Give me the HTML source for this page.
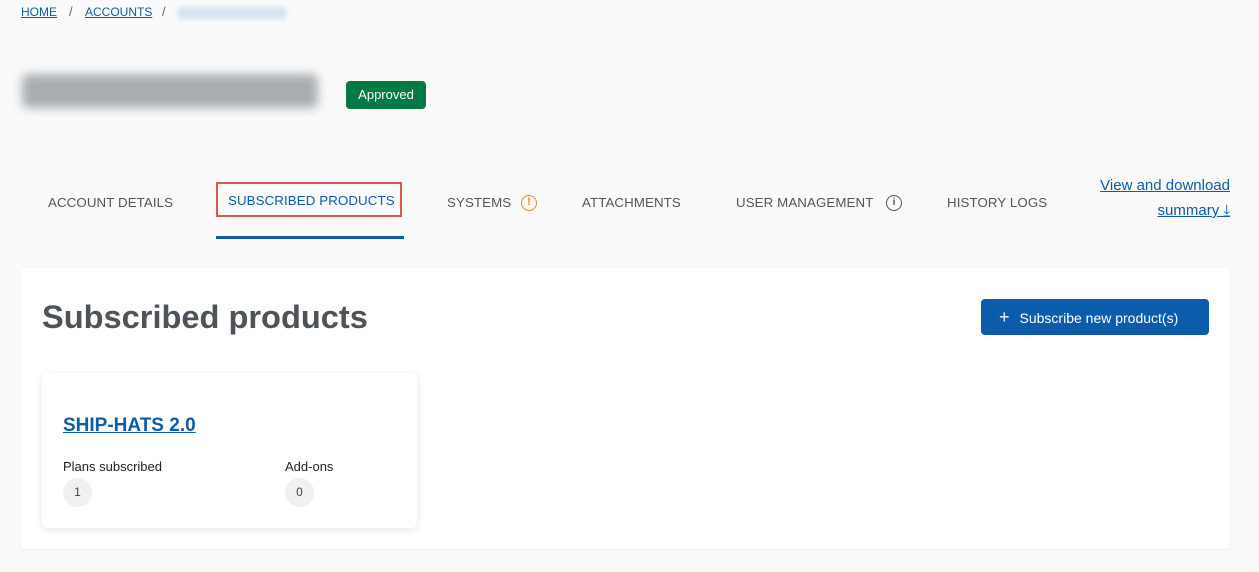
<!DOCTYPE html>
<html><head><meta charset="utf-8"><style>
*{box-sizing:border-box;margin:0;padding:0}
body{width:1259px;height:572px;background:#fafafa;font-family:"Liberation Sans",sans-serif;position:relative;overflow:hidden;color:#333}
.a{position:absolute}
.lnk{color:#0b5cab;text-decoration:underline}
.tab{position:absolute;top:195px;font-size:13.3px;color:#555;letter-spacing:0.1px}
</style></head><body>
<div class="a lnk" style="left:21px;top:5px;font-size:12px">HOME</div>
<div class="a" style="left:69px;top:4px;font-size:13px;color:#666">/</div>
<div class="a lnk" style="left:85px;top:5px;font-size:12px">ACCOUNTS</div>
<div class="a" style="left:162px;top:4px;font-size:13px;color:#666">/</div>
<div class="a" style="left:178px;top:7px;width:108px;height:12px;background:#d6e4f2;filter:blur(2px)"></div>
<div class="a" style="left:22px;top:74px;width:296px;height:34px;background:#a8adb2;filter:blur(5px);border-radius:6px"></div>
<div class="a" style="left:346px;top:81px;width:80px;height:28px;background:#007a45;border-radius:4px;color:#fff;font-size:13px;line-height:28px;text-align:center">Approved</div>
<div class="tab" style="left:48px">ACCOUNT DETAILS</div>
<div class="a" style="left:216px;top:182px;width:186px;height:35px;border:2px solid #e0544c"></div>
<div class="tab" style="left:228px;top:193px;color:#0b5cab">SUBSCRIBED PRODUCTS</div>
<div class="a" style="left:216px;top:236px;width:188px;height:3px;background:#0b5cab"></div>
<div class="tab" style="left:447px">SYSTEMS</div>
<div class="a" style="left:521px;top:195px;width:16px;height:16px;border:1.5px solid #e8892b;border-radius:50%;color:#e8892b;font-size:11px;font-weight:bold;text-align:center;line-height:13px">!</div>
<div class="tab" style="left:582px">ATTACHMENTS</div>
<div class="tab" style="left:736px">USER MANAGEMENT</div>
<div class="a" style="left:886px;top:195px;width:16px;height:16px;border:1.5px solid #555;border-radius:50%;color:#555;font-size:10px;font-weight:bold;text-align:center;line-height:13px">i</div>
<div class="tab" style="left:947px">HISTORY LOGS</div>
<div class="a lnk" style="right:29px;top:173px;font-size:15px;text-align:right;line-height:25px">View and download<br>summary ⤓</div>
<div class="a" style="left:21px;top:268px;width:1209px;height:281px;background:#fff;border-radius:4px;box-shadow:0 1px 3px rgba(0,0,0,0.06)"></div>
<div class="a" style="left:42px;top:298px;font-size:32.6px;font-weight:bold;color:#4d5358">Subscribed products</div>
<div class="a" style="left:981px;top:299px;width:228px;height:36px;background:#0b5cab;border-radius:4px;color:#fff;font-size:14px;line-height:36px;padding-left:18px"><span style="font-size:18px;margin-right:10px">+</span>Subscribe new product(s)</div>
<div class="a" style="left:42px;top:373px;width:375px;height:155px;background:#fff;border-radius:5px;box-shadow:0 2px 8px rgba(0,0,0,0.1)"></div>
<div class="a lnk" style="left:63px;top:415px;font-size:19px;font-weight:bold">SHIP-HATS 2.0</div>
<div class="a" style="left:63px;top:459px;font-size:13px;color:#222">Plans subscribed</div>
<div class="a" style="left:285px;top:459px;font-size:13px;color:#222">Add-ons</div>
<div class="a" style="left:63px;top:478px;width:29px;height:29px;background:#f0f0f0;border-radius:50%;font-size:12px;line-height:29px;text-align:center;color:#444">1</div>
<div class="a" style="left:285px;top:478px;width:29px;height:29px;background:#f0f0f0;border-radius:50%;font-size:12px;line-height:29px;text-align:center;color:#444">0</div>
</body></html>
